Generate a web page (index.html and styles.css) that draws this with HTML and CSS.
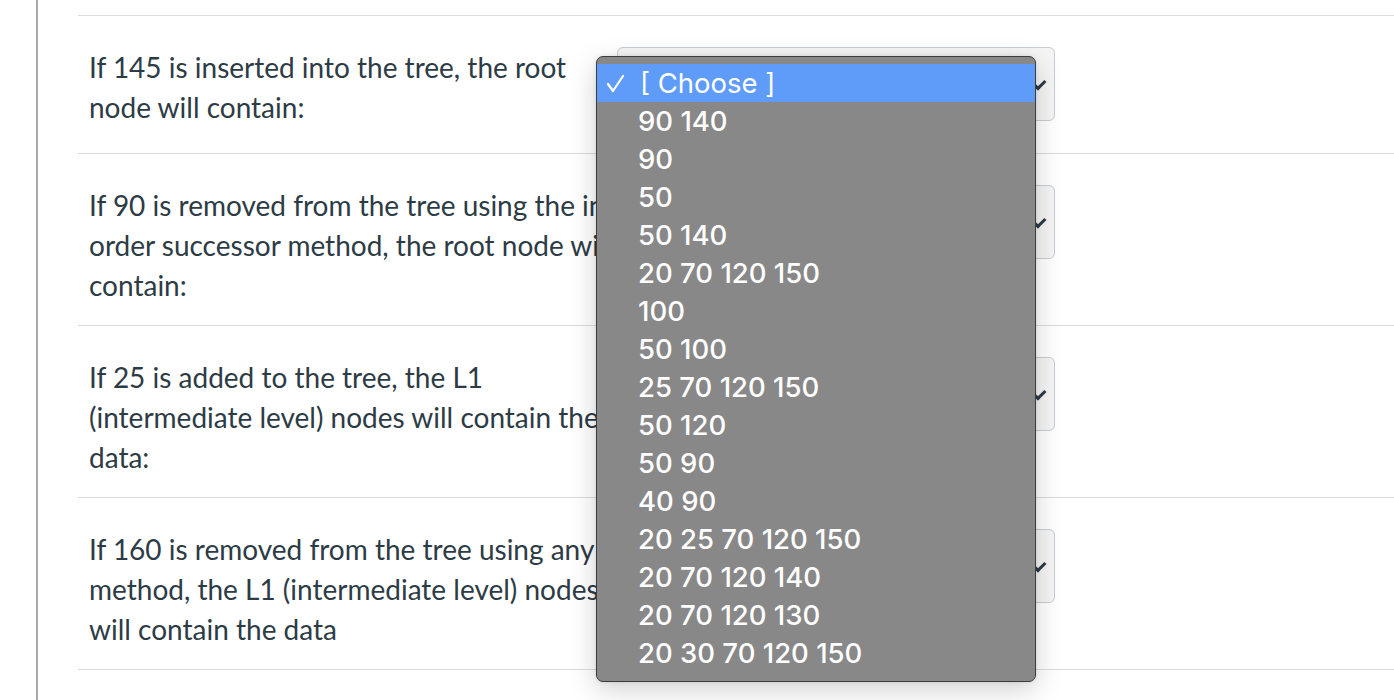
FILE: index.html
```html
<!DOCTYPE html>
<html lang="en">
<head>
<meta charset="utf-8">
<title>Quiz</title>
<link rel="stylesheet" href="styles.css">
</head>
<body>
<div class="layout">
  <div class="gutter"></div>
  <div class="rail"></div>
  <main class="content">
    <div class="row">
      <p class="question">If 145 is inserted into the tree, the root<br>node will contain:</p>
      <div class="select"><span class="chev"></span></div>
    </div>
    <div class="row">
      <p class="question">If 90 is removed from the tree using the in-<br>order successor method, the root node will<br>contain:</p>
      <div class="select"><span class="chev"></span></div>
    </div>
    <div class="row">
      <p class="question">If 25 is added to the tree, the L1<br>(intermediate level) nodes will contain the<br>data:</p>
      <div class="select"><span class="chev"></span></div>
    </div>
    <div class="row last">
      <p class="question">If 160 is removed from the tree using any<br>method, the L1 (intermediate level) nodes<br>will contain the data</p>
      <div class="select"><span class="chev"></span></div>
    </div>
  </main>
</div>
<ul class="popup">
  <li class="opt selected"><svg class="check" width="20" height="20" viewBox="0 0 20 20"><polyline points="2,10 7,17 17,2" fill="none" stroke="#fff" stroke-width="2.2" stroke-linecap="round" stroke-linejoin="round"/></svg>[ Choose ]</li>
  <li class="opt">90 140</li>
  <li class="opt">90</li>
  <li class="opt">50</li>
  <li class="opt">50 140</li>
  <li class="opt">20 70 120 150</li>
  <li class="opt">100</li>
  <li class="opt">50 100</li>
  <li class="opt">25 70 120 150</li>
  <li class="opt">50 120</li>
  <li class="opt">50 90</li>
  <li class="opt">40 90</li>
  <li class="opt">20 25 70 120 150</li>
  <li class="opt">20 70 120 140</li>
  <li class="opt">20 70 120 130</li>
  <li class="opt">20 30 70 120 150</li>
</ul>
</body>
</html>
```
FILE: styles.css
```css
html, body {
  margin: 0;
  padding: 0;
  background: #fff;
  overflow: hidden;
}
body {
  font-family: Lato, "Open Sans", "Liberation Sans", sans-serif;
  color: #2d3b45;
  width: 1394px;
  height: 700px;
  position: relative;
}
.layout {
  display: flex;
  height: 700px;
}
.gutter {
  width: 36px;
  flex: none;
}
.rail {
  width: 2px;
  flex: none;
  background: #a9a9a9;
}
.content {
  flex: 1;
  margin-left: 40px;
  padding-top: 15px;
}
.row {
  display: flex;
  align-items: flex-start;
  border-top: 1px solid #dcdcdc;
  padding: 31px 0 20px 11px;
}
.row.last {
  border-bottom: 1px solid #dcdcdc;
}
.question {
  margin: 0;
  width: 528px;
  flex: none;
  font-size: 28px;
  line-height: 40px;
  white-space: nowrap;
}
.select {
  position: relative;
  width: 436px;
  height: 72px;
  margin-bottom: 12px;
  border: 1px solid #c7cdd1;
  border-radius: 6px;
  background: #f5f5f5;
  flex: none;
}
.chev {
  position: absolute;
  right: 10px;
  top: 28px;
  width: 9px;
  height: 9px;
  border-right: 3px solid #2d3b45;
  border-bottom: 3px solid #2d3b45;
  transform: rotate(45deg);
}
.popup {
  position: absolute;
  left: 596px;
  top: 56px;
  width: 438px;
  margin: 0;
  padding: 7px 0 9px;
  list-style: none;
  background: #888888;
  border: 1px solid #3c3c3c;
  border-radius: 7px;
  box-shadow: 0 8px 28px rgba(0, 0, 0, 0.18), 0 0 4px rgba(0, 0, 0, 0.1);
  font-family: Inter, Roboto, "Liberation Sans", sans-serif;
  font-size: 27.5px;
  font-weight: 500;
  color: #fff;
  z-index: 2;
}
.opt {
  height: 38px;
  line-height: 38px;
  padding-left: 41px;
  position: relative;
  white-space: nowrap;
}
.opt.selected {
  background: #5f9bf8;
  padding-left: 43px;
  font-weight: 400;
}
.check {
  position: absolute;
  left: 9px;
  top: 10px;
}
```
